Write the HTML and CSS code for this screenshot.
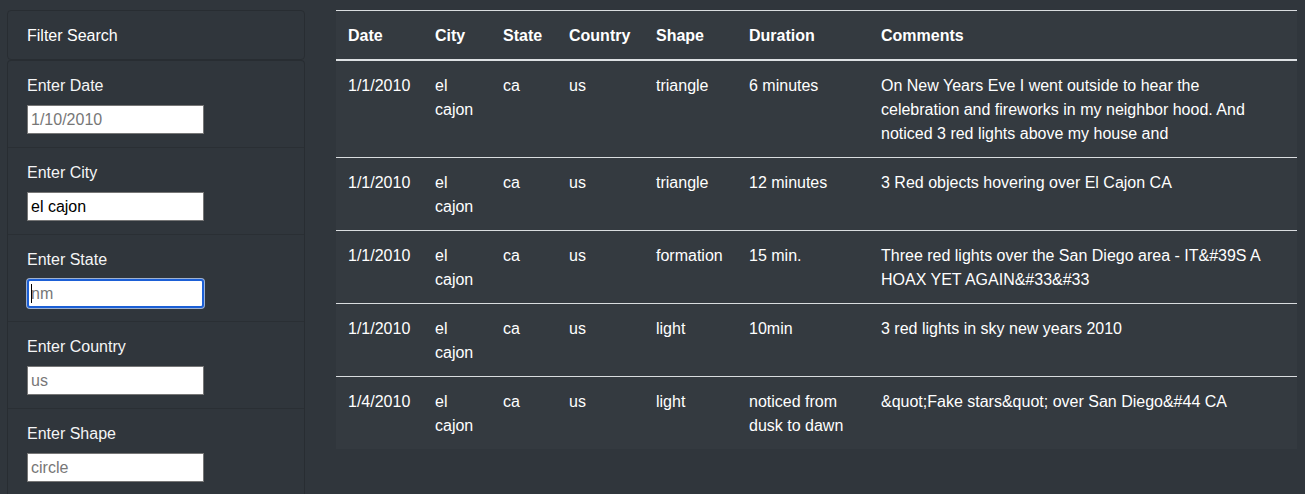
FILE: index.html
```html
<!DOCTYPE html>
<html lang="en">
<head>
<meta charset="utf-8">
<title>UFO Sightings</title>
<link rel="stylesheet" href="styles.css">
</head>
<body>
<div class="layout">
  <aside class="sidebar">
    <div class="card-head">Filter Search</div>
    <ul class="filters">
      <li class="filter">
        <label class="filter-label" for="datetime">Enter Date</label>
        <input class="filter-input" id="datetime" type="text" placeholder="1/10/2010">
      </li>
      <li class="filter">
        <label class="filter-label" for="city">Enter City</label>
        <input class="filter-input" id="city" type="text" value="el cajon">
      </li>
      <li class="filter">
        <label class="filter-label" for="state">Enter State</label>
        <span class="input-wrap">
          <input class="filter-input is-focused" id="state" type="text" placeholder="nm">
          <span class="caret"></span>
        </span>
      </li>
      <li class="filter">
        <label class="filter-label" for="country">Enter Country</label>
        <input class="filter-input" id="country" type="text" placeholder="us">
      </li>
      <li class="filter">
        <label class="filter-label" for="shape">Enter Shape</label>
        <input class="filter-input" id="shape" type="text" placeholder="circle">
      </li>
    </ul>
  </aside>
  <main class="results">
    <table class="ufo-table">
      <colgroup>
        <col class="c-date"><col class="c-city"><col class="c-state"><col class="c-country"><col class="c-shape"><col class="c-duration"><col class="c-comments">
      </colgroup>
      <thead>
        <tr><th>Date</th><th>City</th><th>State</th><th>Country</th><th>Shape</th><th>Duration</th><th class="comments">Comments</th></tr>
      </thead>
      <tbody>
        <tr><td>1/1/2010</td><td>el cajon</td><td>ca</td><td>us</td><td>triangle</td><td>6 minutes</td><td class="comments">On New Years Eve I went outside to hear the celebration and fireworks in my neighbor hood. And noticed 3 red lights above my house and</td></tr>
        <tr><td>1/1/2010</td><td>el cajon</td><td>ca</td><td>us</td><td>triangle</td><td>12 minutes</td><td class="comments">3 Red objects hovering over El Cajon CA</td></tr>
        <tr><td>1/1/2010</td><td>el cajon</td><td>ca</td><td>us</td><td>formation</td><td>15 min.</td><td class="comments">Three red lights over the San Diego area - IT&amp;#39S A HOAX YET AGAIN&amp;#33&amp;#33</td></tr>
        <tr><td>1/1/2010</td><td>el cajon</td><td>ca</td><td>us</td><td>light</td><td>10min</td><td class="comments">3 red lights in sky new years 2010</td></tr>
        <tr><td>1/4/2010</td><td>el cajon</td><td>ca</td><td>us</td><td>light</td><td>noticed from dusk to dawn</td><td class="comments">&amp;quot;Fake stars&amp;quot; over San Diego&amp;#44 CA</td></tr>
      </tbody>
    </table>
  </main>
</div>
</body>
</html>
```

FILE: styles.css
```css
* { box-sizing: border-box; }

html, body {
  margin: 0;
  padding: 0;
  height: 100%;
  overflow: hidden;
}

body {
  background: #30363c;
  color: #ffffff;
  font-family: "Liberation Sans", Arial, Helvetica, sans-serif;
  font-size: 16px;
  line-height: 24px;
}

.layout {
  display: grid;
  grid-template-columns: 298px 961px;
  column-gap: 31px;
  padding: 10px 8px 0 7px;
  align-items: start;
}

/* Sidebar */
.sidebar {
  display: flex;
  flex-direction: column;
}

.card-head {
  border: 1px solid #282d32;
  border-radius: 4px;
  padding: 13px 19px 11px;
  height: 50px;
}

.filters {
  list-style: none;
  margin: 0;
  padding: 0;
  border: 1px solid #282d32;
  border-bottom: none;
  border-radius: 4px 4px 0 0;
}

.filter {
  display: flex;
  flex-direction: column;
  align-items: flex-start;
  padding: 13px 19px 13px;
  border-top: 1px solid #2a2f34;
}

.filter:first-child { border-top: none; }

.filter-label {
  display: block;
  line-height: 24px;
  margin-bottom: 7px;
  color: #f4f5f6;
}

.filter-input {
  display: block;
  width: 177px;
  height: 29px;
  margin: 0;
  padding: 1px 3px;
  border: 1px solid #767676;
  border-radius: 0;
  background: #ffffff;
  color: #000000;
  font-family: "Liberation Sans", Arial, Helvetica, sans-serif;
  font-size: 16px;
  outline: none;
}

.filter-input::placeholder { color: #777777; opacity: 1; }

.filter-input.is-focused {
  border: 2px solid #1b5fd6;
  border-radius: 3px;
  padding: 0 2px;
  box-shadow: 0 0 0 1px #9fb2d0;
}

.input-wrap {
  position: relative;
  display: block;
}

.caret {
  position: absolute;
  left: 4px;
  top: 5px;
  width: 1px;
  height: 19px;
  background: #000000;
}

/* Table */
.results { min-width: 0; }

.ufo-table {
  width: 961px;
  table-layout: fixed;
  border-collapse: collapse;
  background: #343a40;
  border-top: 1px solid #d9dcdf;
}

.c-date { width: 87px; }
.c-city { width: 68px; }
.c-state { width: 66px; }
.c-country { width: 87px; }
.c-shape { width: 93px; }
.c-duration { width: 132px; }
.c-comments { width: 428px; }

.ufo-table th,
.ufo-table td {
  padding: 13px 12px 11px;
  text-align: left;
  vertical-align: top;
  line-height: 24px;
}

.ufo-table .comments { padding-right: 30px; }

.ufo-table th {
  font-weight: bold;
  border-bottom: 2px solid #dde0e3;
}

.ufo-table tbody tr + tr td {
  border-top: 1px solid #d9dcdf;
}
```
